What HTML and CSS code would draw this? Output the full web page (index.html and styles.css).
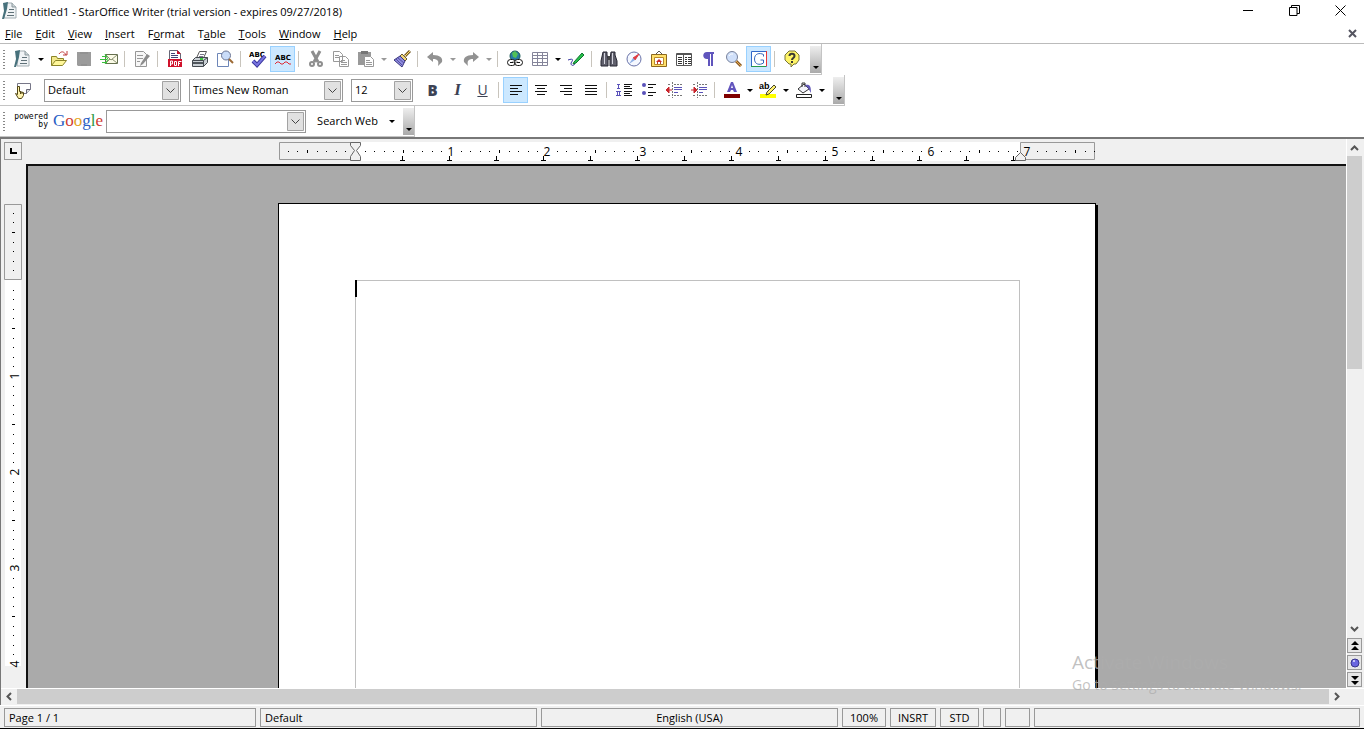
FILE: index.html
```html
<!DOCTYPE html>
<html lang="en">
<head>
    <meta charset="UTF-8">
    <meta name="viewport" content="width=device-width, initial-scale=1.0">
    <title>Untitled1 - StarOffice Writer</title>
    <link rel="stylesheet" href="styles.css">
</head>
<body>
    <header class="titlebar">
        <svg class="app-icon" width="16" height="18" viewBox="0 0 16 18"><path d="M4 1h6l4 4v11H2z" fill="#f0f3f5" stroke="#a3aeb3"/><path d="M1 1l5-1-1 7-3 10H0l2-8z" fill="#47717c"/><path d="M10 1v4h4" fill="#ccd5d8" stroke="#8a979c"/><path d="M7 7.500h5M6 10.500h6M5 13.500h7" stroke="#5f7178"/></svg>
        <span class="title">Untitled1 - StarOffice Writer (trial version - expires 09/27/2018)</span>
        <div class="window-buttons">
            <button aria-label="Minimize"><svg width="11" height="11"><path d="M0 5.500h10" stroke="#000"/></svg></button>
            <button aria-label="Restore"><svg width="11" height="11" fill="none" stroke="#000"><path d="M.5 2.500h7.500v8h-7.500zM2.500 2.500v-2h8v8h-2.500"/></svg></button>
            <button aria-label="Close"><svg width="11" height="11"><path d="M.5.5l10 10M10.500.5l-10 10" stroke="#000"/></svg></button>
        </div>
    </header>

    <nav class="menubar">
        <a href="#"><u>F</u>ile</a>
        <a href="#"><u>E</u>dit</a>
        <a href="#"><u>V</u>iew</a>
        <a href="#"><u>I</u>nsert</a>
        <a href="#">F<u>o</u>rmat</a>
        <a href="#">T<u>a</u>ble</a>
        <a href="#"><u>T</u>ools</a>
        <a href="#"><u>W</u>indow</a>
        <a href="#"><u>H</u>elp</a>
        <button class="close-doc" aria-label="Close document"><svg width="9" height="9"><path d="M1 1l7 7M8 1L1 8" stroke="#555560" stroke-width="2"/></svg></button>
    </nav>

    <!-- Standard toolbar -->
    <div class="toolbar">
        <span class="grip"></span>
        <button class="tool" aria-label="New"><svg width="18" height="18" viewBox="0 0 18 18"><path d="M5 1h6l4 4v11H3z" fill="#f0f3f5" stroke="#a3aeb3"/><path d="M1 1l5-1-1 7-3 10H0l2-8z" fill="#47717c"/><path d="M11 1v4h4" fill="#ccd5d8" stroke="#8a979c"/><path d="M8 7.500h5M7 10.500h6M6 13.500h7" stroke="#5f7178"/></svg></button>
        <button class="drop" aria-label="New options"></button>
        <button class="tool" aria-label="Open"><svg width="18" height="18" viewBox="0 0 18 18"><path d="M1.500 15.500v-9h5l1 2h6v2" fill="#f2e88c" stroke="#8b8428"/><path d="M1.500 15.500l4-5h11l-4 5z" fill="#fff79a" stroke="#8b8428"/><path d="M9 4c2-3 5-3 7 1M17 1v4h-4" fill="none" stroke="#c03b3b"/></svg></button>
        <button class="tool" aria-label="Save"><svg width="18" height="18" viewBox="0 0 18 18"><path d="M2 2h14v14H3l-1-1z" fill="#9b9b9b"/><path d="M5 3h8M6 15h6" stroke="#898989"/></svg></button>
        <button class="tool" aria-label="E-mail"><svg width="18" height="18" viewBox="0 0 18 18"><path d="M5.500 4.500h12v9h-12z" fill="#fbfbe7" stroke="#66704f"/><path d="M6 5l5 5 6-5M6 13l4-4M17 13l-5-4" fill="none" stroke="#8a9174"/><path d="M2 6.500h5M0 9.500h7M2 12.500h5M5 4l3 5.500L5 14" fill="none" stroke="#38c33c"/></svg></button>
        <span class="sep"></span>
        <button class="tool" aria-label="Edit file"><svg width="18" height="18" viewBox="0 0 18 18"><path d="M2.500 1.500h8l3 3v12h-11z" fill="#f7f7f7" stroke="#969696"/><path d="M4 5.500h6M4 8.500h6M4 11.500h3" stroke="#999"/><path d="M8 13l6-9 3 2-7 8-3 2z" fill="#8c8c8c"/></svg></button>
        <span class="sep"></span>
        <button class="tool" aria-label="Export PDF"><svg width="18" height="18" viewBox="0 0 18 18"><path d="M3.500.5h8l3 3v6h-11z" fill="#fff" stroke="#667"/><path d="M11 0l4 4h-4z" fill="#c4122c"/><path d="M5 3.500h4M5 5.500h7M5 7.500h7" stroke="#447"/><path d="M2 9h14v8H2z" fill="#d0122c"/><path d="M4.500 16v-5h2v3h-2M8.500 11.500v4h2v-4zM12.500 16v-4.500h3M12 13.500h2" fill="none" stroke="#fff"/></svg></button>
        <button class="tool" aria-label="Print"><svg width="18" height="18" viewBox="0 0 18 18"><path d="M5.500 8l3-6.500h7l-3 6.500z" fill="#fff" stroke="#555"/><path d="M9 4.500h4M8 6.500h4" stroke="#778"/><path d="M1.500 10.500l3-3h12v5l-4 4h-11z" fill="#c9cfd4" stroke="#444a50"/><path d="M1.500 10.500h11l4-3M12.500 10.500v6" stroke="#444a50" fill="none"/><path d="M2 13h10" stroke="#50565c" stroke-width="2"/><path d="M9 9h3" stroke="#3ec33e" stroke-width="2"/></svg></button>
        <button class="tool" aria-label="Page preview"><svg width="18" height="18" viewBox="0 0 18 18"><path d="M1.500 3.500h11v13h-11z" fill="#fff" stroke="#6d86b8"/><circle cx="10" cy="5.500" r="4.500" fill="#c9dcf9" stroke="#6c7694"/><path d="M13 9l4 4" stroke="#9d6a34" stroke-width="2"/></svg></button>
        <span class="sep"></span>
        <button class="tool" aria-label="Spellcheck"><svg width="18" height="18" viewBox="0 0 18 18"><text class="abc" x="0" y="7">ABC</text><path d="M4 11l4 4 8-9" fill="none" stroke="#37349b" stroke-width="4"/><path d="M4 11l4 4 8-9" fill="none" stroke="#7773df" stroke-width="2"/></svg></button>
        <button class="tool active" aria-label="AutoSpellcheck"><svg width="18" height="18" viewBox="0 0 18 18"><text class="abc" x="1" y="10">ABC</text><path d="M1 14l2-2h2l2 2h2l2-2h2l2 2h2" fill="none" stroke="#de2b35"/></svg></button>
        <span class="sep"></span>
        <button class="tool" aria-label="Cut"><svg width="18" height="18" viewBox="0 0 18 18" fill="none" stroke="#8e8e8e"><path d="M5 1l6 11M13 1L7 12" stroke-width="3"/><circle cx="5" cy="14" r="2" stroke-width="2"/><circle cx="13" cy="14" r="2" stroke-width="2"/></svg></button>
        <button class="tool" aria-label="Copy"><svg width="18" height="18" viewBox="0 0 18 18" fill="#fff" stroke="#999"><path d="M1.500 1.500h6l3 3v7h-9zM7.500 6.500h6l3 3v7h-9z"/><path d="M3 5.500h4M3 7.500h4M9 10.500h4M9 12.500h6M9 14.500h6"/></svg></button>
        <button class="tool" aria-label="Paste"><svg width="18" height="18" viewBox="0 0 18 18"><path d="M1 2h13v13H1z" fill="#999"/><path d="M4 1h7v3H4z" fill="#777"/><path d="M7.500 6.500h6l3 3v7h-9z" fill="#fff" stroke="#999"/><path d="M9 10.500h4M9 12.500h6M9 14.500h6" stroke="#999"/></svg></button>
        <button class="drop dim" aria-label="Paste options"></button>
        <button class="tool" aria-label="Format paintbrush"><svg width="18" height="18" viewBox="0 0 18 18"><path d="M12 6l5-5" stroke="#775a24" stroke-width="3"/><path d="M12 6l5-5" stroke="#ffe06a"/><path d="M9 4l5 5-2 2-5-5z" fill="#f0d475" stroke="#6b5b32"/><path d="M7 6l5 5-3 6-8-7z" fill="#8f8be0" stroke="#37347b"/><path d="M3 9l6 6M5 8l6 5" stroke="#55519e"/></svg></button>
        <span class="sep"></span>
        <button class="tool" aria-label="Undo"><svg width="18" height="18" viewBox="0 0 18 18"><path d="M1 7l6-5v3c7 0 10 3 9 7l-4 4c1-5 0-7-5-7v3z" fill="#929292"/></svg></button>
        <button class="drop dim" aria-label="Undo options"></button>
        <button class="tool" aria-label="Redo"><svg width="18" height="18" viewBox="0 0 18 18"><path d="M17 7l-6-5v3C4 5 1 8 2 12l4 4c-1-5 0-7 5-7v3z" fill="#929292"/></svg></button>
        <button class="drop dim" aria-label="Redo options"></button>
        <span class="sep"></span>
        <button class="tool" aria-label="Hyperlink"><svg width="18" height="18" viewBox="0 0 18 18"><circle cx="9" cy="6" r="5" fill="#2878a4" stroke="#195a55"/><path d="M6 3l3-2 3 3-2 4-3-1z" fill="#52c156"/><rect x="1.500" y="9.500" width="8" height="6" rx="3" fill="#fff" stroke="#111"/><rect x="8.500" y="9.500" width="8" height="6" rx="3" fill="#fff" stroke="#111"/><path d="M4 12.500h3M11 12.500h3M7 11.500l2 2 2-2" fill="none" stroke="#111"/></svg></button>
        <button class="tool" aria-label="Table"><svg width="18" height="18" viewBox="0 0 18 18"><path d="M1.500 2.500h15v13h-15zM1.500 5.500h15M1.500 8.500h15M1.500 12.500h15M6.500 2.500v13M11.500 2.500v13" fill="#fff" stroke="#85859a"/></svg></button>
        <button class="drop" aria-label="Table options"></button>
        <button class="tool" aria-label="Show draw functions"><svg width="18" height="18" viewBox="0 0 18 18"><path d="M1 10c6-2 5 0 3 3 0 3 2 3 4 1" fill="none" stroke="#3935a1"/><path d="M7 12l8-9 2 2-8 8-3 1z" fill="#26c24b" stroke="#117330"/></svg></button>
        <span class="sep"></span>
        <button class="tool" aria-label="Find and replace"><svg width="18" height="18" viewBox="0 0 18 18"><path d="M3 2h4v3l1 4v7H1v-5z" fill="#60606c" stroke="#262632"/><path d="M11 2h4v3l2 6v5h-7V9z" fill="#60606c" stroke="#262632"/><path d="M8 6h2v4H8z" fill="#444"/><path d="M4.500 3v11M12.500 3v11" stroke="#d6d6e0"/></svg></button>
        <button class="tool" aria-label="Navigator"><svg width="18" height="18" viewBox="0 0 18 18"><circle cx="9" cy="9" r="7" fill="#f5f8ff" stroke="#6973a9"/><path d="M14 4l-4 6-2-2z" fill="#df3b40" stroke="#df3b40"/><path d="M4 14l4-6 2 2z" fill="#8dafe5"/></svg></button>
        <button class="tool" aria-label="Gallery"><svg width="18" height="18" viewBox="0 0 18 18"><path d="M5 5l4-4 4 4" fill="none" stroke="#555"/><path d="M1.500 4.500h15v12h-15z" fill="#ffe06b" stroke="#8d681d"/><path d="M4.500 7.500h9v7h-9z" fill="#fff" stroke="#b8882a"/><path d="M9 9l3 3H6z" fill="#cd2929"/><path d="M7 12h1v2h2v-2h1v2H7z" fill="#b2402c"/></svg></button>
        <button class="tool" aria-label="Data sources"><svg width="18" height="18" viewBox="0 0 18 18"><path d="M1.500 3.500h15v12h-15zM8.500 4v11" fill="#fff" stroke="#555"/><path d="M2 4.500h14" stroke="#555"/><path d="M3 7.500h4M3 9.500h4M3 11.500h4M3 13.500h4M10 7.500h2M10 9.500h2M10 11.500h2M10 13.500h2M13 7.500h3M13 9.500h3M13 11.500h3M13 13.500h3" stroke="#333"/></svg></button>
        <button class="tool" aria-label="Nonprinting characters"><svg width="18" height="18" viewBox="0 0 18 18"><path d="M14 2H7C2 2 2 9 7 9h1v7h2V4h1v12h2V4h1z" fill="#6055bd"/></svg></button>
        <button class="tool" aria-label="Zoom"><svg width="18" height="18" viewBox="0 0 18 18"><path d="M11 11l5 5" stroke="#8b5a25" stroke-width="3"/><path d="M11 11l5 5" stroke="#e4ac4d"/><circle cx="7" cy="7" r="5.500" fill="#d0e0fa" stroke="#77819b"/><path d="M4 6c1-2 2-2 4-2" fill="none" stroke="#fff"/></svg></button>
        <button class="tool active" aria-label="Google search bar"><svg width="18" height="18" viewBox="0 0 18 18"><path d="M1.500 1.500h15v15h-15z" fill="#fff" stroke="#3267c7"/><path d="M16.500 1v15" stroke="#e93636"/><path d="M1 16.500h15" stroke="#2a9a49"/><path d="M13.500 6.500v-2c-4-2-9-1-9 4.500s5 6.500 9 4v-3h-3" fill="none" stroke="#3467bd"/></svg></button>
        <span class="sep"></span>
        <button class="tool" aria-label="Help"><svg width="18" height="18" viewBox="0 0 18 18"><path d="M6 1h6l4 4v5l-3 4h-2l-3 3v-3H6l-4-4V5z" fill="#fff568" stroke="#77733a"/><path d="M6.500 6c0-3 5-3 5 0 0 2-2.500 2-2.500 4M9 11v2" fill="none" stroke="#3a3a32" stroke-width="2"/></svg></button>
        <button class="overflow" aria-label="More buttons"></button>
    </div>

    <!-- Formatting toolbar -->
    <div class="toolbar">
        <span class="grip"></span>
        <button class="tool" aria-label="Styles and formatting"><svg width="18" height="18" viewBox="0 0 18 18"><path d="M3.500 2.500h13v6l-4 4h-9z" fill="#fff" stroke="#778"/><path d="M12.500 12.500v-4h4" fill="#ddd" stroke="#667"/><path d="M3.500 5.500h2v5l4 1v3l-2 3h-3l-3-5 2 1z" fill="#fff3ae" stroke="#534714"/><path d="M6.500 10v3M8 11v2" stroke="#534714"/></svg></button>
        <select class="combo style-box" aria-label="Paragraph style"><option>Default</option></select>
        <select class="combo font-box" aria-label="Font name"><option>Times New Roman</option></select>
        <select class="combo size-box" aria-label="Font size"><option>12</option></select>
        <button class="tool letter bold" aria-label="Bold">B</button>
        <button class="tool letter italic" aria-label="Italic">I</button>
        <button class="tool letter underline" aria-label="Underline">U</button>
        <span class="sep"></span>
        <button class="tool active" aria-label="Align left"><svg class="lines" width="18" height="18"><path d="M3 4.500h12M3 7.500h8M3 10.500h12M3 13.500h8"/></svg></button>
        <button class="tool" aria-label="Centered"><svg class="lines" width="18" height="18"><path d="M3 4.500h12M5 7.500h8M3 10.500h12M5 13.500h8"/></svg></button>
        <button class="tool" aria-label="Align right"><svg class="lines" width="18" height="18"><path d="M3 4.500h12M7 7.500h8M3 10.500h12M7 13.500h8"/></svg></button>
        <button class="tool" aria-label="Justified"><svg class="lines" width="18" height="18"><path d="M3 4.500h12M3 7.500h12M3 10.500h12M3 13.500h12"/></svg></button>
        <span class="sep"></span>
        <button class="tool" aria-label="Numbering"><svg class="lines" width="18" height="18"><path d="M9 3.500h8M9 5.500h6M9 7.500h8M9 10.500h8M9 12.500h6M9 14.500h8"/><path class="blue" d="M2 3.500h3M3.500 3v5M2 7.500h3M1 10.500h5M2.500 10v5M4.500 10v5M1 14.500h5"/></svg></button>
        <button class="tool" aria-label="Bullets"><svg class="lines" width="18" height="18"><path d="M8 3.500h8M8 6.500h5M8 11.500h8M8 14.500h5"/><circle cx="4" cy="4" r="2" fill="#5a52ba" stroke="none"/><circle cx="4" cy="12" r="2" fill="#5a52ba" stroke="none"/></svg></button>
        <button class="tool" aria-label="Decrease indent"><svg class="lines" width="18" height="18"><path class="guide" d="M3 3.500h3M9 3.500h8M3 14.500h3M9 14.500h8M7.500 1v16"/><path class="blue" d="M9 6.500h8M9 8.500h8M9 11.500h4"/><path class="red" d="M4 6L1 9l3 3zM2 9h5"/></svg></button>
        <button class="tool" aria-label="Increase indent"><svg class="lines" width="18" height="18"><path class="guide" d="M3 3.500h3M9 3.500h8M3 14.500h3M9 14.500h8M7.500 1v16"/><path class="blue" d="M9 6.500h8M9 8.500h8M9 11.500h4"/><path class="red" d="M4 6l3 3-3 3zM1 9h5"/></svg></button>
        <span class="sep"></span>
        <button class="tool" aria-label="Font color"><svg width="18" height="18" viewBox="0 0 18 18"><path d="M4 11L8 1h2l4 10h-3l-1-2H8l-1 2zM8 7h2L9 4z" fill="#6254bd"/><path d="M1 13h16v4H1z" fill="#800000"/></svg></button>
        <button class="drop" aria-label="Font color options"></button>
        <button class="tool" aria-label="Highlighting"><svg width="18" height="18" viewBox="0 0 18 18"><path d="M1 13h16v4H1z" fill="#ff0"/><text class="ab" x="0" y="8">ab</text><path d="M8 11l7-7 2 2-7 7-3 1z" fill="#fff06f" stroke="#45442a"/></svg></button>
        <button class="drop" aria-label="Highlighting options"></button>
        <button class="tool" aria-label="Background color"><svg width="18" height="18" viewBox="0 0 18 18"><path d="M1.500 13.500h15v3h-15z" fill="#fff" stroke="#222"/><path d="M3 8l6-5 5 5-6 4z" fill="#f4f4fb" stroke="#333"/><path d="M7 6V2h3v4" fill="none" stroke="#333"/><path d="M10 4c5-1 6 1 6 8l-3-5" fill="#6258b8"/></svg></button>
        <button class="drop" aria-label="Background color options"></button>
        <button class="overflow" aria-label="More buttons"></button>
    </div>

    <!-- Search toolbar -->
    <div class="toolbar">
        <span class="grip"></span>
        <label class="google" for="search"><span class="powered">powered<br>by</span><span class="logo"><span class="g-blue">G</span><span class="g-red">o</span><span class="g-yellow">o</span><span class="g-blue">g</span><span class="g-green">l</span><span class="g-red">e</span></span></label>
        <input class="combo search-box" id="search" type="text">
        <button class="search-web">Search Web</button>
        <button class="drop" aria-label="Search options"></button>
        <button class="overflow" aria-label="More buttons"></button>
    </div>

    <main class="workspace">
        <div class="ruler-corner">
            <button class="tab-type" aria-label="Tab type"><svg width="7" height="6"><path d="M1 0v5h6" fill="none" stroke="#000" stroke-width="2"/></svg></button>
        </div>

        <div class="ruler-top">
            <svg class="ruler" width="818" height="20">
                <defs>
                    <pattern id="tenths" x="77" y="0" width="96" height="20" patternUnits="userSpaceOnUse">
                        <path d="M10 9h1v1h-1zM19 9h1v1h-1zM29 9h1v1h-1zM38 9h1v1h-1zM48 8h1v3h-1zM58 9h1v1h-1zM67 9h1v1h-1zM77 9h1v1h-1zM86 9h1v1h-1z"/>
                    </pattern>
                    <pattern id="tabs" x="101" y="0" width="47" height="20" patternUnits="userSpaceOnUse">
                        <path d="M23 14h1v4h-1zM21 18h5v1h-5z"/>
                    </pattern>
                </defs>
                <path d="M77 0h666v19H77z" fill="#fff"/>
                <path d="M1.500.5h76v17h-76zM742.500.5h74v17h-74z" fill="#f0f0f0" stroke="#999"/>
                <path d="M2 0h815v20H2z" fill="url(#tenths)"/>
                <path d="M101 0h641v20H101z" fill="url(#tabs)"/>
                <g class="ruler-numbers">
                    <text x="173" y="14">1</text><text x="269" y="14">2</text><text x="365" y="14">3</text>
                    <text x="461" y="14">4</text><text x="557" y="14">5</text><text x="653" y="14">6</text><text x="749" y="14">7</text>
                </g>
                <path d="M72.500.5h10v3l-4 5 4 6v4h-10v-4l4-6-4-5zM742.500 10.500l5 5v3h-10v-3z" fill="#f0f0f0" stroke="#666"/>
            </svg>
        </div>

        <div class="ruler-side">
            <svg class="ruler" width="18" height="464">
                <defs>
                    <pattern id="tenths-side" x="0" y="76" width="18" height="96" patternUnits="userSpaceOnUse">
                        <path d="M9 10h1v1H9zM9 19h1v1H9zM9 29h1v1H9zM9 38h1v1H9zM8 48h3v1H8zM9 58h1v1H9zM9 67h1v1H9zM9 77h1v1H9zM9 86h1v1H9z"/>
                    </pattern>
                </defs>
                <path d="M1 76h16v386H1z" fill="#fff"/>
                <path d="M.5.5h17v75H.5z" fill="#f0f0f0" stroke="#999"/>
                <path d="M0 1h18v461H0z" fill="url(#tenths-side)"/>
                <g class="ruler-numbers">
                    <text transform="translate(15 172) rotate(-90)">1</text>
                    <text transform="translate(15 268) rotate(-90)">2</text>
                    <text transform="translate(15 364) rotate(-90)">3</text>
                    <text transform="translate(15 460) rotate(-90)">4</text>
                </g>
            </svg>
        </div>

        <div class="canvas">
            <div class="page">
                <textarea class="text-area" aria-label="Document text"></textarea>
                <span class="caret"></span>
            </div>
        </div>

        <div class="scroll-v">
            <button class="arrow" aria-label="Scroll up"><svg width="9" height="6"><path d="M1 5l3.500-3.500L8 5" fill="none" stroke="#555" stroke-width="2"/></svg></button>
            <div class="track"><div class="thumb"></div></div>
            <button class="arrow" aria-label="Scroll down"><svg width="9" height="6"><path d="M1 1l3.500 3.500L8 1" fill="none" stroke="#555" stroke-width="2"/></svg></button>
            <button class="nav" aria-label="Previous page"><svg width="8" height="10"><path d="M4 0l4 4H0zM4 5l4 4H0z"/></svg></button>
            <button class="nav" aria-label="Navigation"><svg width="10" height="10"><circle cx="5" cy="5" r="4" fill="#6a66e0" stroke="#38358c"/><circle cx="4" cy="3" r="1" fill="#e6e6ff"/></svg></button>
            <button class="nav" aria-label="Next page"><svg width="8" height="10"><path d="M0 1h8L4 5zM0 6h8l-4 4z"/></svg></button>
        </div>

        <div class="scroll-h">
            <button class="arrow" aria-label="Scroll left"><svg width="6" height="9"><path d="M5 1L1.500 4.500 5 8" fill="none" stroke="#555" stroke-width="2"/></svg></button>
            <div class="thumb"></div>
            <button class="arrow" aria-label="Scroll right"><svg width="6" height="9"><path d="M1 1l3.500 3.500L1 8" fill="none" stroke="#555" stroke-width="2"/></svg></button>
        </div>

        <div class="watermark">
            <p class="watermark-title">Activate Windows</p>
            <p>Go to Settings to activate Windows.</p>
        </div>
    </main>

    <footer class="statusbar">
        <span>Page 1 / 1</span>
        <span>Default</span>
        <span class="center">English (USA)</span>
        <span class="center">100%</span>
        <span class="center">INSRT</span>
        <span class="center">STD</span>
        <span></span>
        <span></span>
        <span></span>
    </footer>
</body>
</html>
```
FILE: styles.css
```css
* {
    box-sizing: border-box;
}

body {
    margin: 0;
    height: 100vh;
    display: flex;
    flex-direction: column;
    overflow: hidden;
    background-color: #fff;
    border-bottom: 1px solid #000;
    font-family: "Open Sans", "Noto Sans", sans-serif;
    font-size: 11px;
    line-height: 16px;
    color: #000;
}

button {
    display: flex;
    align-items: center;
    justify-content: center;
    padding: 0;
    border: none;
    background: none;
    font: inherit;
    color: inherit;
}

svg {
    display: block;
    flex: none;
}

/* title and menu */
.titlebar {
    display: flex;
    align-items: center;
    height: 22px;
    padding-left: 2px;
}

.title {
    margin-left: 4px;
    padding-top: 1px;
    white-space: nowrap;
}

.window-buttons {
    display: flex;
    align-self: flex-start;
    margin-left: auto;
    padding-right: 1px;
}

.window-buttons button {
    width: 46px;
    height: 21px;
}

.menubar {
    display: flex;
    align-items: center;
    gap: 13px;
    height: 22px;
    padding: 2px 7px 0 5px;
    border-bottom: 1px solid #bbb;
}

.menubar a {
    color: #000;
    text-decoration: none;
}

.close-doc {
    margin-left: auto;
}

/* toolbars */
.toolbar {
    display: flex;
    align-items: center;
    align-self: flex-start;
    height: 31px;
    border-right: 1px solid #c4c4c4;
    border-bottom: 1px solid #c4c4c4;
}

.grip {
    width: 2px;
    height: 19px;
    margin: 0 5px 0 3px;
    background: repeating-linear-gradient(#888 0 1px, #fff 1px 3px);
}

.tool {
    width: 25px;
    height: 26px;
}

.active {
    background-color: #cce8ff;
    border: 1px solid #99d1ff;
}

.drop {
    width: 11px;
    height: 26px;
}

.drop::after {
    content: "";
    border: 3px solid transparent;
    border-top-color: #000;
    border-bottom: none;
}

.dim::after {
    border-top-color: #999;
}

.sep {
    width: 1px;
    height: 16px;
    margin: 0 4px 0 3px;
    background-color: #c8c4bc;
}

.overflow {
    width: 11px;
    height: 27px;
    margin-left: 6px;
    align-items: flex-end;
    padding-bottom: 4px;
    background: linear-gradient(#eee, #aaa);
}

.overflow::after {
    content: "";
    border: 3px solid transparent;
    border-top-color: #000;
    border-bottom: none;
}

.abc {
    font: bold 7px "DejaVu Sans", sans-serif;
}

.ab {
    font: bold 9px "Liberation Sans", sans-serif;
}

.letter {
    font-size: 15px;
    color: #3c4254;
}

.bold {
    font-weight: 800;
}

.italic {
    font-family: "Liberation Serif", serif;
    font-style: italic;
    font-weight: bold;
    font-size: 17px;
}

.underline {
    font-size: 14px;
    text-decoration: underline;
}

.lines {
    fill: none;
    stroke: #111;
}

.guide {
    stroke: #777;
    stroke-dasharray: 2 1;
}

.blue {
    stroke: #5a52ba;
}

.red {
    fill: #c9252d;
    stroke: #c9252d;
}

.combo {
    height: 23px;
    padding: 0 22px 0 3px;
    appearance: none;
    border: 1px solid #999;
    border-radius: 0;
    font: inherit;
    color: #000;
    background: #fff url("data:image/svg+xml,%3Csvg xmlns='http://www.w3.org/2000/svg' width='17' height='19'%3E%3Cpath d='M.5.5h16v18H.5z' fill='%23e1e1e1' stroke='%23a3a3a3'/%3E%3Cpath d='M4.500 7.500l4 4 4-4' fill='none' stroke='%23444'/%3E%3C/svg%3E") no-repeat right 1px center;
}

.style-box {
    width: 137px;
    margin-left: 9px;
}

.font-box {
    width: 154px;
    margin-left: 8px;
}

.size-box {
    width: 62px;
    margin: 0 7px 0 8px;
}

.google {
    display: flex;
    align-items: center;
    margin-left: 4px;
}

.powered {
    width: 34px;
    font: 8px/8px "DejaVu Sans Mono", monospace;
    text-align: right;
}

.logo {
    width: 54px;
    padding-left: 5px;
    font: 17px/20px "Liberation Serif", serif;
}

.g-blue {
    color: #2a5ec4;
}

.g-red {
    color: #cf3b32;
}

.g-yellow {
    color: #e3a51c;
}

.g-green {
    color: #2e9a45;
}

.search-box {
    width: 200px;
    margin-left: 4px;
}

.search-web {
    width: 80px;
    padding-left: 3px;
}

/* document area */
.workspace {
    position: relative;
    flex: 1;
    min-height: 0;
    display: grid;
    grid-template-columns: 25px 1fr 18px;
    grid-template-rows: 25px 1fr 17px;
    border-top: 2px solid #777;
    border-left: 1px solid #777;
    background-color: #f0f0f0;
}

.ruler-corner {
    padding: 3px;
}

.tab-type {
    width: 18px;
    height: 18px;
    border: 1px solid #999;
}

.ruler-top {
    padding: 3px 0 0 2px;
}

.ruler-top .ruler {
    margin: 0 auto;
}

.ruler-side {
    padding: 40px 0 0 3px;
    overflow: hidden;
}

.ruler-numbers {
    font-size: 12px;
    text-anchor: middle;
}

.canvas {
    overflow: hidden;
    border-top: 2px solid #111;
    border-left: 2px solid #111;
    background-color: #aaa;
}

.page {
    position: relative;
    display: flex;
    width: 818px;
    height: 1056px;
    margin: 37px auto 0;
    padding: 76px 75px 76px 76px;
    border: 1px solid #000;
    background-color: #fff;
    box-shadow: 2px 2px 0 #000;
}

.text-area {
    flex: 1;
    padding: 0;
    border: 1px solid #c0c0c0;
    outline: none;
    resize: none;
    font: 16px "Liberation Serif", serif;
}

.caret {
    position: absolute;
    top: 76px;
    left: 76px;
    width: 2px;
    height: 17px;
    background-color: #000;
}

.scroll-v {
    grid-column: 3;
    grid-row: 1 / 3;
    display: flex;
    flex-direction: column;
    align-items: center;
    padding-right: 2px;
    border-left: 1px solid #fff;
}

.scroll-v .arrow {
    width: 15px;
    height: 17px;
}

.track {
    flex: 1;
    width: 15px;
}

.track .thumb {
    height: 46%;
    background-color: #cdcdcd;
}

.nav {
    width: 15px;
    height: 15px;
    margin: 1px 0;
    border: 1px solid #999;
    background-color: #e6e6e6;
}

.scroll-h {
    grid-column: 1 / 4;
    display: flex;
    padding: 0 19px 1px 0;
    border-top: 1px solid #fff;
}

.scroll-h .arrow {
    width: 16px;
}

.scroll-h .thumb {
    flex: 1;
    background-color: #cdcdcd;
}

.watermark {
    position: absolute;
    right: 54px;
    bottom: 10px;
    width: 238px;
    color: rgba(173, 173, 173, 0.75);
    font-size: 14px;
    line-height: 20px;
    white-space: nowrap;
    pointer-events: none;
}

.watermark p {
    margin: 0;
}

.watermark .watermark-title {
    font-size: 19px;
    line-height: 26px;
}

/* status bar */
.statusbar {
    display: grid;
    grid-template-columns: 252px 277px 297px 44px 46px 39px 18px 25px 1fr;
    gap: 4px;
    padding: 2px 4px 1px;
    border-top: 1px solid #fff;
    background-color: #f0f0f0;
}

.statusbar span {
    height: 19px;
    padding: 0 4px;
    border: 1px solid #999;
    line-height: 18px;
}

.statusbar .center {
    padding: 0;
    text-align: center;
}
```
